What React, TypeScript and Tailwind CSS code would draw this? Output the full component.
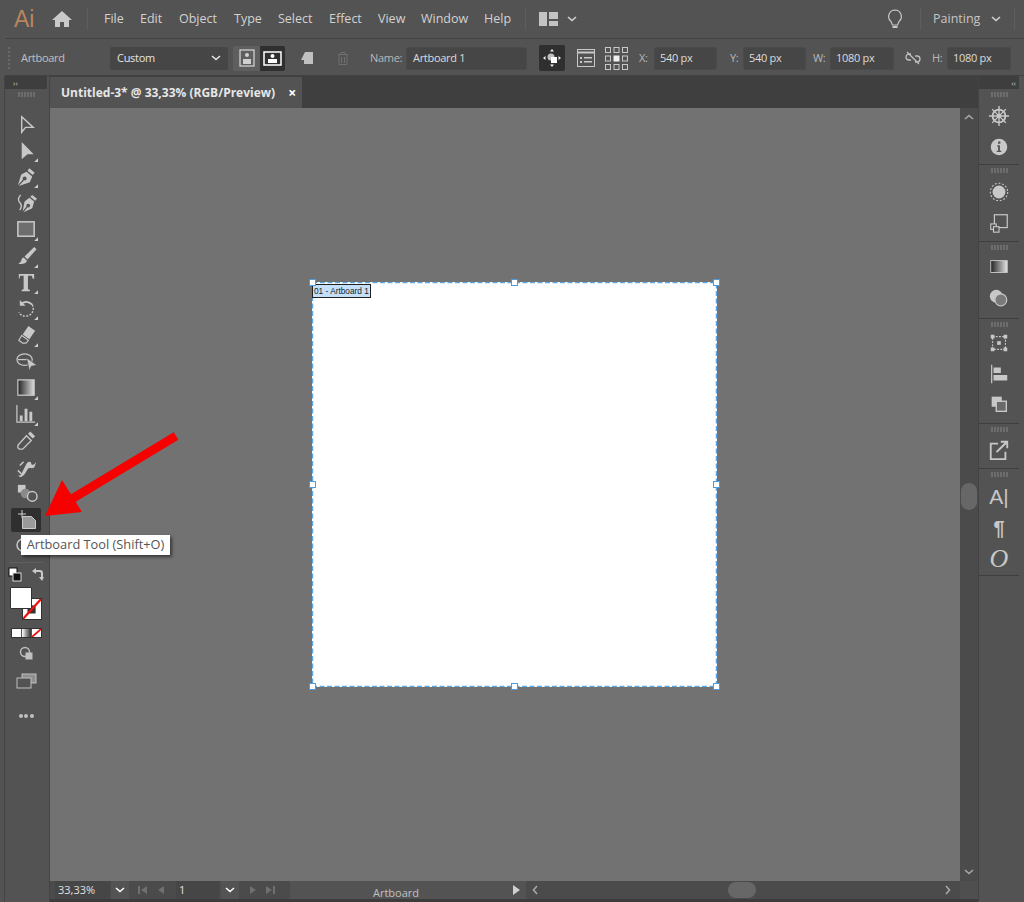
import React from 'react'

const ui = "font-['Open_Sans','Noto_Sans',sans-serif]"

function Chevron({ className = '' }: { className?: string }) {
  return (
    <svg width="10" height="6" viewBox="0 0 10 6" className={className}>
      <path d="M1 1l4 3.5L9 1" fill="none" stroke="currentColor" strokeWidth="1.6" />
    </svg>
  )
}

function Grip({ className = '' }: { className?: string }) {
  return (
    <div className={`flex justify-center gap-px ${className}`}>
      {[0, 1, 2, 3, 4, 5].map((i) => (
        <span key={i} className="w-[2px] h-[5px] bg-[#6d6d6d]" />
      ))}
    </div>
  )
}

function Corner() {
  return <path d="M24 24h-4l4-4z" fill="#cfcfcf" />
}

const c = '#c8c8c8'

const tools: React.ReactNode[] = [
  <path d="M7 4l12 11h-8l-4 5z" fill="none" stroke={c} strokeWidth="1.5" />,
  <>
    <path d="M7 3l12.5 13H13l-6 5z" fill={c} />
    <Corner />
  </>,
  <>
    <path d="M15 3.5l5.5 4.5-2 2.5L13 6zM12 7l6 5-2.5 6L4 22l5.500-6a2 2 0 1 0-1.200-1L3 21l3.500-11z" fill={c} />
    <Corner />
  </>,
  <>
    <path d="M18 3l5 4-2 2-5-4zM15 6l5 4-2 7-9 4 4-5a2 2 0 1 0-1-1l-4 5 2-10z" fill={c} />
    <path d="M6 3C3 6 3 9 5 11s2 5 0 8" fill="none" stroke={c} strokeWidth="1.4" />
  </>,
  <>
    <rect x="3" y="4" width="17" height="15" fill="#6e6e6e" stroke={c} strokeWidth="1.6" />
    <Corner />
  </>,
  <>
    <path d="M20 2l2.500 2.500L13 15l-3-3z" fill={c} />
    <path d="M9 13l3.500 3.500c-1 3-5 4-9 3 2-1 3-2 3.200-4 .1-1 1.300-2.500 2.300-2.500z" fill={c} />
    <Corner />
  </>,
  <>
    <path d="M4 3h16v5h-1.500l-1-3h-4v14l2 .5V21H7v-1.500l2-.5V5H5.500l-1 3H4z" fill={c} />
    <Corner />
  </>,
  <>
    <path d="M18 8c2 4 1 9-3 11s-9 1-11-3" fill="none" stroke={c} strokeWidth="1.500" strokeDasharray="2 1.500" />
    <path d="M5 3v6h6z" fill={c} />
    <path d="M6 8c3-4 8-4 12 0" fill="none" stroke={c} strokeWidth="1.800" />
    <Corner />
  </>,
  <>
    <path d="M14 2l7 5-6 9-7-5z" fill={c} />
    <path d="M7 12l7 5-2.500 3H8l-4-3z" fill="#535353" stroke={c} strokeWidth="1.200" />
    <Corner />
  </>,
  <>
    <ellipse cx="10" cy="10" rx="8" ry="6" fill="none" stroke={c} strokeWidth="1.300" />
    <path d="M3 10h11" stroke={c} strokeWidth="1.300" />
    <path d="M12 8l11 8-6 1-2 5z" fill={c} stroke="#535353" strokeWidth=".8" />
  </>,
  <>
    <defs>
      <linearGradient id="tg">
        <stop offset="0" stopColor="#222" />
        <stop offset="1" stopColor="#ddd" />
      </linearGradient>
    </defs>
    <rect x="3" y="3" width="17" height="16" fill="url(#tg)" stroke={c} strokeWidth="1.300" />
    <Corner />
  </>,
  <>
    <path d="M2 2v18h19" fill="none" stroke={c} strokeWidth="1.300" />
    <path d="M5 13h3v6H5zM10 6h3v13h-3zM15 9h3v10h-3z" fill={c} />
    <Corner />
  </>,
  <>
    <path d="M16 2.500l5 5-2.500 2.500-5-5z" fill={c} />
    <path d="M12 7l5 5-9 9H4.500L3 19.500V17z" fill="none" stroke={c} strokeWidth="1.400" />
  </>,
  <>
    <path d="M3 20c4 2 4-3 6-6s3-8 6-8 1 4 4 3 2-3 3-2l-2 5c-3 2-5-1-7 2s-4 8-8 8z" fill={c} />
    <path d="M3 15l5 5M9 6l-4 4" stroke={c} strokeWidth="1.500" />
  </>,
  <>
    <rect x="3" y="3" width="8" height="8" fill={c} />
    <circle cx="11" cy="12" r="5" fill="#8a8a8a" />
    <circle cx="18" cy="15" r="5" fill="#535353" stroke={c} strokeWidth="1.500" />
  </>,
]

const rightGroups: { h: string; mt: string; icons: React.ReactNode[] }[] = [
  {
    h: 'h-[76px]',
    mt: 'mt-[4px]',
    icons: [
      <>
        <circle cx="12" cy="12" r="7" fill="none" stroke={c} strokeWidth="2" />
        <circle cx="12" cy="12" r="2.500" fill={c} />
        <path d="M12 1v22M1 12h22M4.500 4.500l15 15M19.500 4.500l-15 15" stroke={c} strokeWidth="1.500" />
      </>,
      <>
        <circle cx="12" cy="12" r="9" fill={c} />
        <path d="M10 10h3v6h1.500v1.500h-5V16H11v-4.500h-1zM11 6h2.500v2.500H11z" fill="#535353" />
      </>,
    ],
  },
  {
    h: 'h-[77px]',
    mt: 'mt-[4px]',
    icons: [
      <>
        <circle cx="12" cy="12" r="7" fill={c} />
        <circle cx="12" cy="12" r="9.500" fill="none" stroke={c} strokeWidth="1.200" strokeDasharray="2 2" />
      </>,
      <>
        <rect x="7" y="3" width="14" height="14" fill="none" stroke={c} strokeWidth="1.300" />
        <rect x="3" y="13" width="6" height="6" fill="#535353" stroke={c} strokeWidth="1.200" />
        <rect x="6" y="16" width="6" height="6" fill="#535353" stroke={c} strokeWidth="1.200" />
      </>,
    ],
  },
  {
    h: 'h-[77px]',
    mt: 'mt-[2px]',
    icons: [
      <>
        <defs>
          <linearGradient id="rg">
            <stop offset="0" stopColor="#222" />
            <stop offset="1" stopColor="#e4e4e4" />
          </linearGradient>
        </defs>
        <rect x="3" y="5" width="18" height="13" fill="url(#rg)" stroke={c} strokeWidth="1" />
      </>,
      <>
        <circle cx="9" cy="10" r="7" fill={c} />
        <circle cx="14" cy="14" r="6.500" fill="#7a7a7a" stroke={c} strokeWidth="1.300" />
      </>,
    ],
  },
  {
    h: 'h-[105px]',
    mt: 'mt-[1px]',
    icons: [
      <>
        <rect x="5" y="5" width="14" height="14" fill="none" stroke={c} strokeWidth="1.200" strokeDasharray="2 1.500" />
        <path d="M3 3h4v4H3zM17 3h4v4h-4zM3 17h4v4H3zM17 17h4v4h-4z" fill={c} />
        <rect x="10" y="10" width="4" height="4" fill={c} />
      </>,
      <>
        <path d="M4 2v20" stroke={c} strokeWidth="1.300" />
        <path d="M6 5h8v6H6zM6 13h15v6H6z" fill={c} />
      </>,
      <>
        <rect x="4" y="4" width="11" height="11" fill={c} />
        <rect x="9" y="9" width="11" height="11" fill="#6a6a6a" stroke={c} strokeWidth="1.500" />
      </>,
    ],
  },
  {
    h: 'h-[45px]',
    mt: 'mt-[3px]',
    icons: [
      <>
        <path d="M11 5H3v17h16v-8" fill="none" stroke={c} strokeWidth="2" />
        <path d="M14 2h8v8h-2V5.500L10 15l-1.500-1.500L18 4h-4z" fill={c} />
      </>,
    ],
  },
]

function Field({ label, value, w, labelW }: { label: string; value: string; w: string; labelW: string }) {
  return (
    <div className="flex items-center">
      <span className={`${labelW} text-[#b9b9b9] text-[11px]`}>{label}</span>
      <div className={`${w} h-[23px] flex items-center pl-[5px] bg-[#464646] border border-[#4b4b4b] rounded-[2px] text-[#dcdcdc] text-[11px]`}>
        {value}
      </div>
    </div>
  )
}

function Sep() {
  return <div className="w-px h-[22px] bg-[#5e5e5e]" />
}

const handle = 'absolute w-[7px] h-[7px] bg-white border border-[#4a9be0]'

export default function App() {
  return (
    <div className={`w-[1024px] h-[902px] relative overflow-hidden bg-[#535353] flex flex-col ${ui}`}>
      {/* menu bar */}
      <header className="h-[38px] shrink-0 flex items-center">
        <span className="ml-[14px] w-[20px] text-[#b9855f] text-[23px] leading-none font-['Liberation_Sans',sans-serif]">Ai</span>
        <svg width="20" height="18" viewBox="0 0 20 18" className="ml-[18px]">
          <path d="M10 1L0 10h3v7h5v-5h4v5h5v-7h3z" fill="#c9c9c9" />
        </svg>
        <div className="ml-[15px] mr-[16px]"><Sep /></div>
        <nav className="flex text-[12.5px] text-[#d2d2d2]">
          <span className="w-[36px]">File</span>
          <span className="w-[39px]">Edit</span>
          <span className="w-[55px]">Object</span>
          <span className="w-[44px]">Type</span>
          <span className="w-[51px]">Select</span>
          <span className="w-[49px]">Effect</span>
          <span className="w-[43px]">View</span>
          <span className="w-[63px]">Window</span>
          <span>Help</span>
        </nav>
        <div className="ml-[14px] mr-[13px]"><Sep /></div>
        <svg width="19" height="14" viewBox="0 0 19 14">
          <path d="M0 0h8v14H0zM10 0h9v7h-9zM10 9h9v5h-9z" fill="#c3c3c3" />
        </svg>
        <Chevron className="ml-[9px] text-[#d2d2d2]" />
        <svg width="16" height="20" viewBox="0 0 16 20" className="ml-[310px]">
          <path d="M8 1a6.500 6.500 0 0 0-4 11.500L5.500 16h5l1.500-3.500A6.500 6.500 0 0 0 8 1z" fill="none" stroke="#c9c9c9" strokeWidth="1.200" />
          <path d="M5.500 17h5v2h-5z" fill="#c9c9c9" />
        </svg>
        <div className="ml-[17px] mr-[12px]"><Sep /></div>
        <span className="text-[12.5px] text-[#c6c6c6]">Painting</span>
        <Chevron className="ml-[11px] text-[#d2d2d2]" />
        <div className="ml-[13px]"><Sep /></div>
      </header>

      {/* control bar */}
      <div className="h-[38px] shrink-0 flex items-center pt-[2px] ml-[5px] border-y border-[#424242] bg-[#535353] tracking-[-0.3px]">
        <div className="w-[6px] ml-[3px] h-[22px] border-l-2 border-dotted border-[#6a6a6a]" />
        <span className="ml-[7px] w-[89px] text-[11px] text-[#c0c0c0]">Artboard</span>
        <div className="w-[118px] h-[23px] flex items-center justify-between px-[7px] bg-[#464646] rounded-[2px] text-[11px] text-[#e4e4e4]">
          Custom
          <Chevron className="text-[#e4e4e4]" />
        </div>
        <div className="ml-[5px] flex">
          <div className="w-[27px] h-[25px] flex items-center justify-center bg-[#5f5f5f] rounded-l-[2px]">
            <svg width="16" height="18" viewBox="0 0 16 18">
              <rect x="1" y="1" width="14" height="16" fill="none" stroke="#d0d0d0" strokeWidth="1.300" />
              <circle cx="8" cy="6" r="2" fill="#d0d0d0" />
              <path d="M4 15v-5h8v5z" fill="#d0d0d0" />
            </svg>
          </div>
          <div className="w-[25px] h-[25px] flex items-center justify-center bg-[#2f2f2f] rounded-r-[2px]">
            <svg width="19" height="15" viewBox="0 0 19 15">
              <rect x="1" y="1" width="17" height="13" fill="none" stroke="#fff" strokeWidth="1.500" />
              <circle cx="9.500" cy="5" r="2" fill="#fff" />
              <path d="M5 12V8h9v4z" fill="#fff" />
            </svg>
          </div>
        </div>
        <svg width="12" height="12" viewBox="0 0 12 12" className="ml-[16px]">
          <path d="M4 0h8v12H3V8H0z" fill="#c0c0c0" />
        </svg>
        <svg width="12" height="13" viewBox="0 0 12 13" className="ml-[24px]">
          <path d="M1 2.500h10M4 2V.500h4V2M2 3v9.500h8V3M4.500 5v6M7.500 5v6" fill="none" stroke="#6f6f6f" />
        </svg>
        <span className="ml-[21px] w-[36px] text-[11px] text-[#b9b9b9]">Name:</span>
        <div className="w-[121px] h-[23px] flex items-center pl-[6px] bg-[#464646] border border-[#4b4b4b] rounded-[2px] text-[11px] text-[#dcdcdc]">Artboard 1</div>
        <div className="ml-[12px] w-[26px] h-[26px] flex items-center justify-center bg-[#2f2f2f] rounded-[2px]">
          <svg width="20" height="20" viewBox="0 0 20 20">
            <path d="M10 1l2 2.500H8zM10 19l2-2.500H8zM1 10l2.500-2v4zM19 10l-2.500-2v4z" fill="#f0f0f0" />
            <circle cx="9" cy="9" r="3.500" fill="#c0c0c0" />
            <rect x="9" y="9" width="6" height="6" fill="#fff" />
          </svg>
        </div>
        <svg width="18" height="18" viewBox="0 0 18 18" className="ml-[12px]">
          <path d="M0 0h18v18H0z" fill="none" stroke="#c8c8c8" strokeWidth="2" />
          <path d="M0 3.500h18" stroke="#c8c8c8" strokeWidth="2" />
          <path d="M3 8h2v2H3zM3 12h2v2H3zM7 8h8v1.500H7zM7 12h8v1.500H7z" fill="#c8c8c8" />
        </svg>
        <svg width="23" height="23" viewBox="0 0 23 23" className="ml-[10px]">
          <g fill="none" stroke="#c8c8c8">
            <rect x=".5" y=".5" width="5" height="5" /><rect x="9" y=".5" width="5" height="5" /><rect x="17.500" y=".5" width="5" height="5" />
            <rect x=".5" y="9" width="5" height="5" /><rect x="17.500" y="9" width="5" height="5" />
            <rect x=".5" y="17.500" width="5" height="5" /><rect x="9" y="17.500" width="5" height="5" /><rect x="17.500" y="17.500" width="5" height="5" />
          </g>
          <rect x="8.500" y="8.500" width="6" height="6" fill="#f0f0f0" />
        </svg>
        <div className="ml-[11px] flex items-center">
          <Field label="X:" value="540 px" labelW="w-[15px]" w="w-[63px]" />
          <div className="ml-[13px]"><Field label="Y:" value="540 px" labelW="w-[13px]" w="w-[63px]" /></div>
          <div className="ml-[7px]"><Field label="W:" value="1080 px" labelW="w-[17px]" w="w-[64px]" /></div>
          <svg width="16" height="14" viewBox="0 0 16 14" className="ml-[11px]">
            <path d="M6 3H4a3 3 0 0 0 0 6h2M10 5h2a3 3 0 0 1 0 6h-2M2 1l12 12" fill="none" stroke="#c0c0c0" strokeWidth="1.300" />
          </svg>
          <div className="ml-[11px]"><Field label="H:" value="1080 px" labelW="w-[15px]" w="w-[64px]" /></div>
        </div>
      </div>

      {/* body */}
      <div className="flex-1 flex min-h-0">
        {/* tools */}
        <aside className="w-[46px] shrink-0 flex flex-col ml-[4px] border-l border-r border-[#444444] pr-[2px]">
          <div className="h-[13px] bg-[#3e3e3e] text-[#c8c8c8] text-[8px] leading-[13px] pl-[8px]">››</div>
          <Grip className="mt-[3px]" />
          <div className="mt-[14px] flex flex-col items-center">
            {tools.map((t, i) => (
              <div key={i} className="h-[26.4px] w-full flex items-center justify-center">
                <svg width="23" height="23" viewBox="0 0 24 24">
                  {t}
                </svg>
              </div>
            ))}
            <div className="h-[24px] w-[30px] mt-[1px] flex items-center justify-center bg-[#2f2f2f] rounded-[2px]">
              <svg width="23" height="21" viewBox="0 0 23 21">
                <path d="M7 1v8M3 5h8" stroke="#d0d0d0" strokeWidth="1" />
                <path d="M7.500 7.500h9l4 4v8h-13z" fill="#9a9a9a" stroke="#c8c8c8" />
              </svg>
            </div>
            <div className="h-[26px] w-full flex items-center pl-[10px]">
              <svg width="16" height="16" viewBox="0 0 16 16">
                <circle cx="8" cy="8" r="6" fill="none" stroke="#c8c8c8" strokeWidth="1.500" />
              </svg>
            </div>
            <div className="w-[34px] h-px bg-[#5f5f5f] mt-[4px]" />
            <div className="mt-[4px] w-[36px] flex items-center justify-between">
              <svg width="14" height="15" viewBox="0 0 14 15">
                <rect x="1" y="1" width="8" height="8" fill="#fff" stroke="#111" />
                <rect x="5" y="6" width="8" height="8" fill="#111" stroke="#ddd" />
              </svg>
              <svg width="13" height="14" viewBox="0 0 13 14">
                <path d="M5 1L1 4l4 3V5h4a2 2 0 0 1 1 2v3H8l3 4 2-4h-1V6a3 3 0 0 0-3-3H5z" fill="#c8c8c8" />
              </svg>
            </div>
            <div className="relative mt-[5px] w-[34px] h-[34px]">
              <div className="absolute left-[13px] top-[11px] w-[20px] h-[22px] bg-white border border-[#333]">
                <svg viewBox="0 0 20 22" className="absolute inset-0 w-full h-full">
                  <rect x="5" y="7" width="9" height="9" fill="#333" />
                  <path d="M0 22L20 0" stroke="#f01010" strokeWidth="2.500" />
                </svg>
              </div>
              <div className="absolute left-[1px] top-0 w-[22px] h-[22px] bg-white border border-[#333] rounded-[1px]" />
            </div>
            <div className="mt-[7px] flex gap-px border border-[#333]">
              <div className="w-[9px] h-[8px] bg-white" />
              <div className="w-[9px] h-[8px] bg-gradient-to-r from-white to-[#333]" />
              <svg width="9" height="8" viewBox="0 0 9 8" className="bg-white">
                <path d="M0 8L9 0" stroke="#f01010" strokeWidth="1.800" />
              </svg>
            </div>
            <svg width="15" height="15" viewBox="0 0 15 15" className="mt-[8px]">
              <circle cx="6" cy="6" r="4.500" fill="none" stroke="#c0c0c0" strokeWidth="1.400" />
              <rect x="6.500" y="6.500" width="7" height="7" fill="#c0c0c0" />
            </svg>
            <svg width="21" height="16" viewBox="0 0 21 16" className="mt-[12px]">
              <rect x="6" y="1" width="14" height="9" fill="#8f8f8f" stroke="#c0c0c0" />
              <rect x="1" y="5" width="14" height="10" fill="#535353" stroke="#c0c0c0" />
            </svg>
            <div className="mt-[25px] flex gap-[1.5px]">
              <span className="w-[4px] h-[4px] rounded-full bg-[#c0c0c0]" />
              <span className="w-[4px] h-[4px] rounded-full bg-[#c0c0c0]" />
              <span className="w-[4px] h-[4px] rounded-full bg-[#c0c0c0]" />
            </div>
          </div>
        </aside>

        {/* document */}
        <main className="flex-1 min-w-0 flex flex-col">
          <div className="h-[32px] shrink-0 flex bg-[#3f3f3f]">
            <div className="w-[252px] mt-px flex items-center bg-[#535353] pl-[11px] text-[12px] font-bold text-[#e6e6e6] whitespace-nowrap">
              Untitled-3* @ 33,33% (RGB/Preview)
              <span className="ml-[13px] text-[14px] font-bold text-white leading-none">×</span>
            </div>
          </div>
          <div className="flex-1 min-h-0 flex">
            <div className="relative flex-1 bg-[#727272]">
              <div className="absolute left-[262px] top-[174px] w-[405px] h-[405px] bg-white">
                <svg width="405" height="405" viewBox="0 0 405 405" className="absolute inset-0">
                  <rect x=".5" y=".5" width="404" height="404" fill="none" stroke="#5aa8e8" strokeWidth="1.500" strokeDasharray="5 2.500" />
                </svg>
                <div className="absolute left-0 top-[2px] h-[14px] w-[59px] bg-[#c4e0f8] border border-[#222] text-[8.3px] leading-[12px] pl-[1px] text-[#222] whitespace-nowrap font-['Liberation_Sans',sans-serif]">01 - Artboard 1</div>
                <span className={`${handle} -left-[3px] -top-[3px]`} />
                <span className={`${handle} left-[199px] -top-[3px]`} />
                <span className={`${handle} -right-[3px] -top-[3px]`} />
                <span className={`${handle} -left-[3px] top-[199px]`} />
                <span className={`${handle} -right-[3px] top-[199px]`} />
                <span className={`${handle} -left-[3px] -bottom-[3px]`} />
                <span className={`${handle} left-[199px] -bottom-[3px]`} />
                <span className={`${handle} -right-[3px] -bottom-[3px]`} />
              </div>
            </div>
            {/* v scrollbar */}
            <div className="relative w-[18px] shrink-0 bg-[#4b4b4b] flex flex-col items-center justify-between py-[6px] text-[#a8a8a8]">
              <Chevron className="rotate-180" />
              <div className="absolute left-[1px] top-[375px] w-[16px] h-[27px] rounded-[8px] bg-[#676767]" />
              <Chevron />
            </div>
          </div>
          {/* status bar */}
          <div className="h-[18px] shrink-0 flex items-center bg-[#4b4b4b] text-[11px]">
            <div className="w-[55px] ml-[5px] h-full bg-[#464646] flex items-center pl-[3px] text-[#e0e0e0]">33,33%</div>
            <div className="ml-px w-[18px] h-full bg-[#535353] flex items-center justify-center text-white"><Chevron /></div>
            <svg width="40" height="10" viewBox="0 0 40 10" className="ml-[8px]">
              <path d="M1 1h2v8H1zM10 1v8L4 5zM27 1v8l-6-4z" fill="#6f6f6f" />
            </svg>
            <div className="w-[43px] h-full bg-[#464646] flex items-center pl-[3px] text-[#e0e0e0] -ml-px">1</div>
            <div className="ml-[2px] w-[18px] h-full bg-[#535353] flex items-center justify-center text-white"><Chevron /></div>
            <svg width="40" height="10" viewBox="0 0 40 10" className="ml-[10px]">
              <path d="M1 1v8l6-4zM17 1v8l6-4zM24 1h2v8h-2z" fill="#6f6f6f" />
            </svg>
            <div className="ml-px w-[217px] h-full bg-[#535353] flex items-center justify-center text-[#c0c0c0] pr-[5px] pt-[6px]">Artboard</div>
            <div className="w-[19px] h-full bg-[#535353] flex items-center justify-center">
              <svg width="7" height="10" viewBox="0 0 7 10"><path d="M0 0l7 5-7 5z" fill="#d0d0d0" /></svg>
            </div>
            <div className="relative flex-1 h-full flex items-center justify-between pl-[4px] pr-[7px] text-[#a8a8a8]">
              <Chevron className="rotate-90" />
              <div className="absolute left-[202px] top-[1px] w-[28px] h-[16px] rounded-[8px] bg-[#676767]" />
              <Chevron className="-rotate-90" />
            </div>
            <div className="w-[18px] h-full bg-[#4f4f4f]" />
          </div>
          <div className="h-[3px] shrink-0 bg-[#3c3c3c]" />
        </main>

        {/* right dock */}
        <aside className="w-[46px] shrink-0 flex flex-col border-l border-[#434343] pr-[5px]">
          <div className="h-[13px] bg-[#3e3e3e] text-[#c8c8c8] text-[8px] leading-[13px] text-right pr-[3px]">‹‹</div>
          {rightGroups.map((g, i) => (
            <section key={i} className={`${g.h} shrink-0 flex flex-col border-b border-[#3f3f3f] pt-[3px]`}>
              <Grip />
              <div className={g.mt}>
                {g.icons.map((ic, j) => (
                  <div key={j} className="h-[30.5px] flex items-center justify-center">
                    <svg width="22" height="22" viewBox="0 0 24 24">
                      {ic}
                    </svg>
                  </div>
                ))}
              </div>
            </section>
          ))}
          <section className="h-[107px] shrink-0 flex flex-col border-b border-[#3f3f3f] pt-[3px]">
            <Grip />
            <div className="mt-[4px] flex flex-col items-center text-[#c8c8c8] leading-none">
              <span className="h-[31px] flex items-center text-[21px] font-['Liberation_Sans',sans-serif]">A<span className="font-light">|</span></span>
              <span className="h-[31px] flex items-center text-[20px] font-bold font-['Liberation_Sans',sans-serif]">¶</span>
              <span className="h-[31px] flex items-center text-[26px] italic font-['Liberation_Serif',serif]">O</span>
            </div>
          </section>
        </aside>
      </div>

      {/* tooltip and annotation */}
      <div className="absolute left-[21px] top-[535px] h-[20px] w-[149px] flex items-center justify-center bg-white text-[12.8px] text-[#555] shadow-[2px_2px_3px_rgba(0,0,0,0.5)] whitespace-nowrap">
        Artboard Tool (Shift+O)
      </div>
      <svg width="140" height="90" viewBox="0 0 140 90" className="absolute left-[40px] top-[430px]">
        <path d="M136 6L30 70" stroke="#f60000" strokeWidth="9" />
        <path d="M5 86L42 82 22 50z" fill="#f60000" />
      </svg>
    </div>
  )
}
